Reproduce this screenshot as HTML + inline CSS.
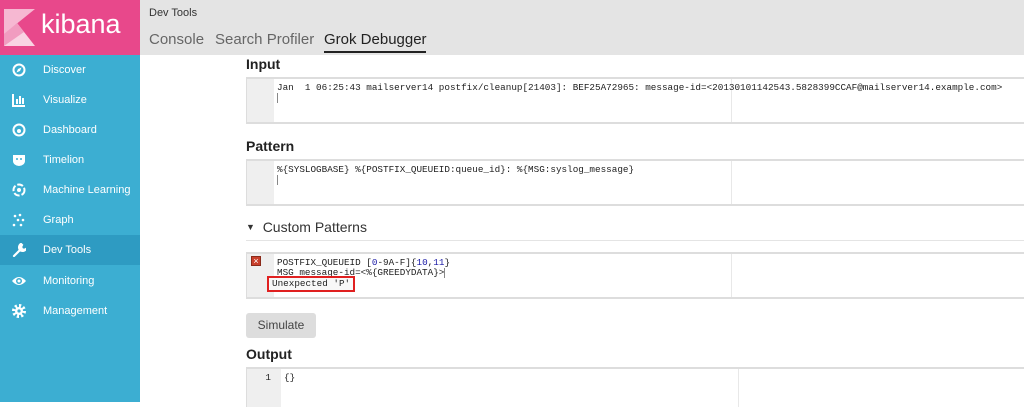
<!DOCTYPE html>
<html><head><style>
*{margin:0;padding:0;box-sizing:border-box}
body{width:1024px;height:402px;overflow:hidden;background:#fff;font-family:"Liberation Sans",sans-serif;position:relative}
.side{position:absolute;left:0;top:0;width:140px;height:402px;background:#3caed2}
.logo{height:55px;background:#e8488b;position:relative}
.logo span{position:absolute;left:41px;top:9px;color:#fff;font-size:27px}
.nav{position:absolute;left:0;width:140px;height:30px;color:#fff;font-size:11px;line-height:30px;padding-left:43px}
.nav.act{background:#2e9bc2}
.ic{position:absolute;left:12px;top:8px;width:14px;height:14px}
.hdr{position:absolute;left:140px;top:0;width:884px;height:55px;background:#e4e4e4}
.hdr .t{position:absolute;left:9px;top:7px;font-size:11px;color:#333}
.tab{position:absolute;top:31px;font-size:15px;color:#666}
.h{position:absolute;left:246px;font-size:14px;font-weight:bold;color:#222}
.ed{position:absolute;left:246px;right:0;border-top:2px solid #ddd;border-bottom:2px solid #ddd;border-left:1px solid #ddd;background:#fff}
.gut{position:absolute;left:0;top:0;bottom:0;width:27px;background:#efefef}
.pm{position:absolute;top:0;bottom:0;width:1px;background:#e8e8e8}
.code{position:absolute;left:30px;top:4px;font-family:"Liberation Mono",monospace;font-size:9.3px;color:#222;white-space:pre;line-height:10px}
.cur{display:inline-block;width:1px;height:10px;background:#888;vertical-align:top}
</style></head><body>
<div class="side">
<div class="logo">
<svg style="position:absolute;left:4px;top:9px" width="31" height="37" viewBox="0 0 31 37"><polygon points="0,0 31,0 0,25" fill="#f6b8d2"/><polygon points="0,25 13,14 31,37 0,37" fill="#f9d3e3"/><polygon points="0,25 13,14 20,23 0,37" fill="#f19cc0"/></svg>
<span>kibana</span></div>
<div class="nav" style="top:55px"><svg class="ic" viewBox="0 0 14 14"><circle cx="7" cy="7" r="5.5" fill="none" stroke="#fff" stroke-width="2"/><path d="M9.5 4.5 L6 6 4.5 9.5 8 8z" fill="#fff"/></svg>Discover</div>
<div class="nav" style="top:85px"><svg class="ic" viewBox="0 0 14 14"><path d="M1 1v12h12" stroke="#fff" stroke-width="2" fill="none"/><rect x="4" y="6" width="2" height="5" fill="#fff"/><rect x="7" y="3" width="2" height="8" fill="#fff"/><rect x="10" y="5" width="2" height="6" fill="#fff"/></svg>Visualize</div>
<div class="nav" style="top:115px"><svg class="ic" viewBox="0 0 14 14"><circle cx="7" cy="7" r="5.5" fill="none" stroke="#fff" stroke-width="2"/><circle cx="7" cy="8" r="2" fill="#fff"/></svg>Dashboard</div>
<div class="nav" style="top:145px"><svg class="ic" viewBox="0 0 14 14"><path d="M1 2h12v6a6 5 0 0 1-12 0z" fill="#fff"/><circle cx="5" cy="6" r="1" fill="#3caed2"/><circle cx="9" cy="6" r="1" fill="#3caed2"/></svg>Timelion</div>
<div class="nav" style="top:175px"><svg class="ic" viewBox="0 0 14 14"><circle cx="7" cy="7" r="5.5" fill="none" stroke="#fff" stroke-width="2" stroke-dasharray="6 2"/><circle cx="7" cy="7" r="2" fill="#fff"/></svg>Machine Learning</div>
<div class="nav" style="top:205px"><svg class="ic" viewBox="0 0 14 14"><g fill="#fff"><circle cx="3" cy="3" r="1.3"/><circle cx="8" cy="2" r="1.3"/><circle cx="6" cy="7" r="1.3"/><circle cx="11" cy="7" r="1.3"/><circle cx="2" cy="12" r="1.3"/><circle cx="9" cy="12" r="1.3"/></g></svg>Graph</div>
<div class="nav act" style="top:235px"><svg class="ic" viewBox="0 0 14 14"><path d="M2 13l6-6M9 1a4 4 0 0 0-1 6 4 4 0 0 0 6-1l-2 1-2-1-1-2 1-2z" stroke="#fff" stroke-width="2.2" fill="#fff" stroke-linecap="round"/></svg>Dev Tools</div>
<div class="nav" style="top:266px"><svg class="ic" viewBox="0 0 14 14"><path d="M0 7q7-8 14 0q-7 8-14 0z" fill="#fff"/><circle cx="7" cy="7" r="3" fill="#3caed2"/><circle cx="7" cy="7" r="1.5" fill="#fff"/></svg>Monitoring</div>
<div class="nav" style="top:296px"><svg class="ic" viewBox="0 0 14 14"><circle cx="7" cy="7" r="5" fill="none" stroke="#fff" stroke-width="4" stroke-dasharray="2 1.9"/><circle cx="7" cy="7" r="4" fill="#fff"/><circle cx="7" cy="7" r="1.6" fill="#3caed2"/></svg>Management</div>
</div>
<div class="hdr"><div class="t">Dev Tools</div>
<div class="tab" style="left:9px">Console</div>
<div class="tab" style="left:75px">Search Profiler</div>
<div class="tab" style="left:184px;color:#222">Grok Debugger</div>
<div style="position:absolute;left:184px;top:51px;width:102px;height:2px;background:#222"></div>
</div>
<div class="h" style="top:56px">Input</div>
<div class="ed" style="top:77px;height:47px"><div class="gut"></div><div class="pm" style="left:484px"></div><div class="code">Jan  1 06:25:43 mailserver14 postfix/cleanup[21403]: BEF25A72965: message-id=&lt;20130101142543.5828399CCAF@mailserver14.example.com&gt;
<span class="cur"></span></div></div>
<div class="h" style="top:138px">Pattern</div>
<div class="ed" style="top:159px;height:47px"><div class="gut"></div><div class="pm" style="left:484px"></div><div class="code">%{SYSLOGBASE} %{POSTFIX_QUEUEID:queue_id}: %{MSG:syslog_message}
<span class="cur"></span></div></div>
<div style="position:absolute;left:246px;top:219px;font-size:14px;color:#333"><span style="font-size:9px;position:relative;top:-2px">&#9660;</span>&nbsp; Custom Patterns</div>
<div style="position:absolute;left:246px;right:0;top:240px;height:1px;background:#e4e4e4"></div>
<div class="ed" style="top:252px;height:47px"><div class="gut"></div><div class="pm" style="left:484px"></div>
<div style="position:absolute;left:4px;top:2px;width:10px;height:10px;background:#c9402c;border:1px solid #8a2a1a;color:#fff;font-size:9px;line-height:8px;text-align:center">×</div>
<div class="code">POSTFIX_QUEUEID [<span style="color:#1a1aa6">0</span>-9A-F]{<span style="color:#1a1aa6">10</span>,<span style="color:#1a1aa6">11</span>}
MSG message-id=&lt;%{GREEDYDATA}&gt;<span class="cur"></span></div>
<div style="position:absolute;left:20px;top:22px;border:2px solid #e02020;background:#f8f8f8;padding:1px 3px;font-family:'Liberation Mono',monospace;font-size:9.3px;line-height:10px;color:#222">Unexpected 'P'</div>
</div>
<div style="position:absolute;left:246px;top:313px;width:70px;height:25px;background:#ddd;border-radius:3px;font-size:12px;color:#444;text-align:center;line-height:25px">Simulate</div>
<div class="h" style="top:346px">Output</div>
<div class="ed" style="top:367px;height:40px;border-bottom:none"><div class="gut" style="width:34px"></div><div class="pm" style="left:491px"></div>
<div class="code" style="left:0;width:24px;text-align:right">1</div><div class="code" style="left:37px">{}</div></div>
</body></html>
